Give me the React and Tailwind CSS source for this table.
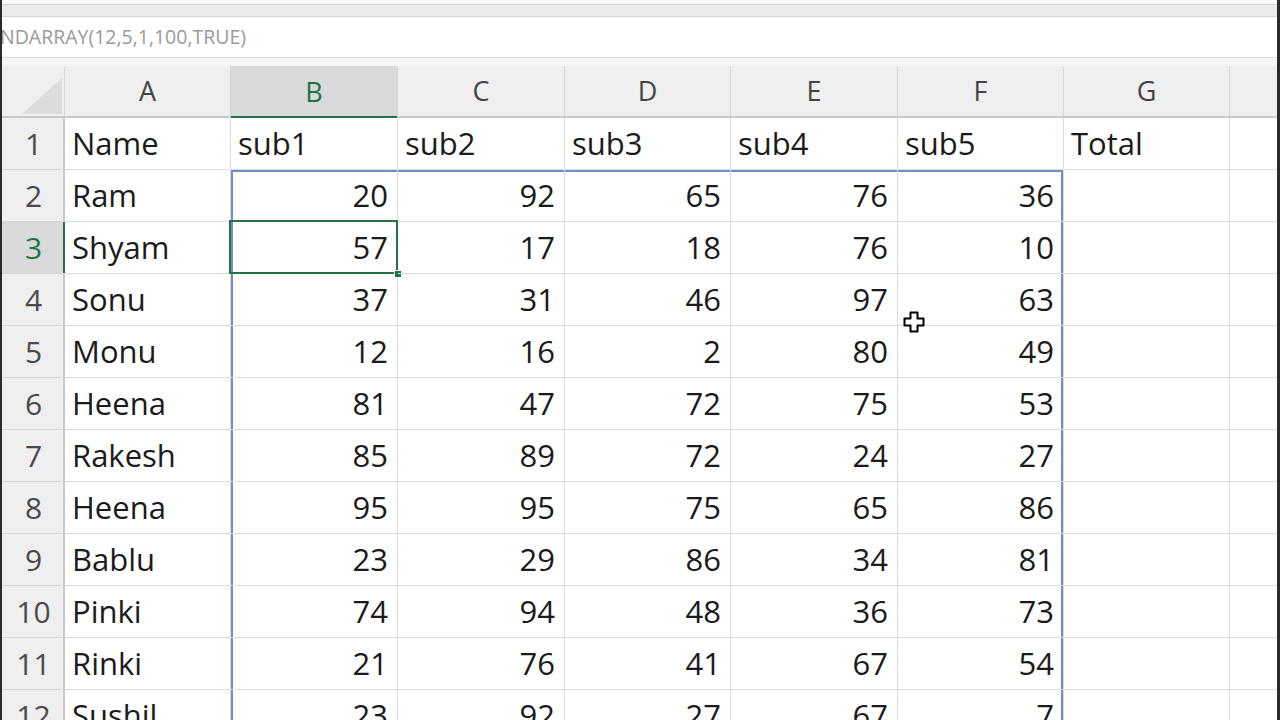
import React from 'react';

const FONT = { fontFamily: '"Open Sans", "Noto Sans", sans-serif' };

const COLS = ['A', 'B', 'C', 'D', 'E', 'F', 'G'];

const ROWS = [
  ['Name', 'sub1', 'sub2', 'sub3', 'sub4', 'sub5', 'Total'],
  ['Ram', 20, 92, 65, 76, 36],
  ['Shyam', 57, 17, 18, 76, 10],
  ['Sonu', 37, 31, 46, 97, 63],
  ['Monu', 12, 16, 2, 80, 49],
  ['Heena', 81, 47, 72, 75, 53],
  ['Rakesh', 85, 89, 72, 24, 27],
  ['Heena', 95, 95, 75, 65, 86],
  ['Bablu', 23, 29, 86, 34, 81],
  ['Pinki', 74, 94, 48, 36, 73],
  ['Rinki', 21, 76, 41, 67, 54],
  ['Sushil', 23, 92, 27, 67, 7],
];

const GRID = 'grid grid-cols-[63px_166px_167px_167px_166px_167px_166px_166px_1fr]';

// selection range B2:F12 drawn as inset shadows on the edge cells
function selShadow(r, c) {
  if (r < 1 || c < 1 || c > 5) return '';
  const top = r === 1;
  const left = c === 1;
  const right = c === 5;
  if (top && left) return 'shadow-[inset_2px_0_0_#6f8dc6,inset_0_2px_0_#6f8dc6]';
  if (top && right) return 'shadow-[inset_-2px_0_0_#6f8dc6,inset_0_2px_0_#6f8dc6]';
  if (top) return 'shadow-[inset_0_2px_0_#6f8dc6]';
  if (left) return 'shadow-[inset_2px_0_0_#6f8dc6]';
  if (right) return 'shadow-[inset_-2px_0_0_#6f8dc6]';
  return '';
}

function Cursor() {
  return (
    <svg className="absolute left-[903px] top-[311px] z-20" width="22" height="22" viewBox="0 0 22 22">
      <path
        d="M7.5 1.5h7v6h6v7h-6v6h-7v-6h-6v-7h6z"
        fill="#fff"
        stroke="#000"
        strokeWidth="2"
        strokeLinejoin="round"
      />
    </svg>
  );
}

function HeaderRow() {
  return (
    <div className="bg-[#f6f6f6] pt-[8px] shrink-0">
      <div className={`${GRID} h-[52px] border-b-2 border-[#c8c8c8] bg-[#efefef]`}>
        <div className="relative border-r border-[#d6d6d6]">
          <svg className="absolute left-[20px] top-[12px]" width="40" height="36" viewBox="0 0 40 36">
            <polygon points="0,36 40,36 40,0" fill="#dcdcdc" />
          </svg>
        </div>
        {COLS.map((c) => (
          <div
            key={c}
            className={
              c === 'B'
                ? 'flex items-center justify-center bg-[#d9d9d9] text-[27px] text-[#217346] border-r border-[#d6d6d6] shadow-[inset_0_-2px_0_#217346] -mb-[2px]'
                : 'flex items-center justify-center text-[27px] text-[#444] border-r border-[#d6d6d6]'
            }
          >
            {c}
          </div>
        ))}
        <div />
      </div>
    </div>
  );
}

function DataRow({ row, r }) {
  const active = r === 2;
  return (
    <div className={`${GRID} h-[52px] shrink-0 ${active ? 'relative z-10' : ''}`}>
      <div
        className={
          active
            ? 'flex items-center justify-center bg-[#d9d9d9] text-[30px] text-[#217346] border-b border-[#d6d6d6] shadow-[inset_-2px_0_0_#217346]'
            : 'flex items-center justify-center bg-[#efefef] text-[30px] text-[#4a4a4a] border-b border-[#d6d6d6] shadow-[inset_-2px_0_0_#c8c8c8]'
        }
      >
        {r + 1}
      </div>
      {[0, 1, 2, 3, 4, 5, 6].map((c) => {
        const v = row[c];
        const num = typeof v === 'number';
        return (
          <div
            key={c}
            className={`relative flex items-center border-r border-b border-[#dcdcdc] text-[31px] text-[#1b1b1b] ${
              num ? 'justify-end pr-[9px]' : 'justify-start pl-[7px]'
            } ${selShadow(r, c)}`}
          >
            {v}
            {active && c === 1 && (
              <>
                <div className="absolute -left-[2px] -top-[2px] -right-px -bottom-px border-2 border-[#217346]" />
                <div className="absolute -right-[5px] -bottom-[5px] w-[8px] h-[8px] bg-[#217346] border border-white" />
              </>
            )}
          </div>
        );
      })}
      <div className="border-b border-[#dcdcdc]" />
    </div>
  );
}

export default function App() {
  return (
    <div className="relative w-[1280px] h-[720px] overflow-hidden bg-white flex" style={FONT}>
      <div className="w-[2px] bg-[#2a2a2a]" />
      <div className="flex-1 flex flex-col overflow-hidden">
        {/* ribbon edge */}
        <div className="h-[4px] bg-[#fafafa] shrink-0" />
        <div className="h-[13px] bg-[#ebebeb] border-y border-[#d4d4d4] shrink-0" />
        {/* formula bar */}
        <div className="h-[41px] shrink-0 flex items-center border-b border-[#dadada] overflow-hidden">
          <span className="text-[19.5px] text-[#9a9a9a] whitespace-nowrap -ml-[2px]">NDARRAY(12,5,1,100,TRUE)</span>
        </div>
        <HeaderRow />
        {ROWS.map((row, r) => (
          <DataRow key={r} row={row} r={r} />
        ))}
      </div>
      <div className="w-[3px] bg-[#2a2a2a]" />
      <Cursor />
    </div>
  );
}
